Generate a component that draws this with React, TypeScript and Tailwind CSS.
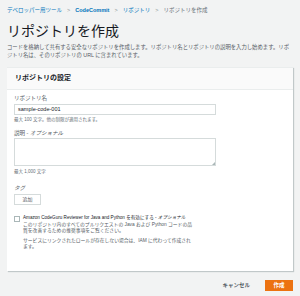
const Sep = () => <span className="mx-[5px] text-[#879596]">&gt;</span>;

export default function App() {
  return (
    <div
      className="w-[300px] h-[296px] overflow-hidden bg-[#f2f3f3] text-[#16191f]"
      style={{ fontFamily: '"Liberation Sans", "Noto Sans CJK JP", sans-serif' }}
    >
      <div className="px-[7px] pt-[6px]">
        <div className="flex items-center text-[5.5px] leading-[8px] h-[8px]">
          <span className="text-[#0073bb]">デベロッパー用ツール</span>
          <Sep />
          <span className="text-[#0073bb] font-bold">CodeCommit</span>
          <Sep />
          <span className="text-[#0073bb]">リポジトリ</span>
          <Sep />
          <span className="text-[#687078]">リポジトリを作成</span>
        </div>
        <h1 className="mt-[9px] text-[14px] leading-[16px] text-[#16191f]">リポジトリを作成</h1>
        <div className="mt-[4px] text-[5.35px] leading-[8px] text-[#545b64] whitespace-nowrap">
          <div>コードを格納して共有する安全なリポジトリを作成します。リポジトリ名とリポジトリの説明を入力し始めます。リポ</div>
          <div>ジトリ名は、そのリポジトリの URL に含まれています。</div>
        </div>

        <div className="mt-[8px] bg-white shadow-[1px_1px_1px_rgba(0,28,36,0.2)] border-t border-[#eaeded]">
          <div className="h-[22px] bg-[#fafafa] border-b border-[#eaeded] px-[8px] flex items-center">
            <span className="text-[7px] font-bold text-[#16191f]">リポジトリの設定</span>
          </div>
          <div className="px-[7px] pt-[5px] pb-[20px]">
            <div className="text-[5.5px] leading-[7px] text-[#545b64]">リポジトリ名</div>
            <div className="mt-[2px] w-[202px] h-[11px] border border-[#d5dbdb] flex items-center px-[3px] text-[5.5px] text-[#16191f]">
              sample-code-001
            </div>
            <div className="mt-[2px] text-[4.5px] leading-[6px] text-[#687078]">最大 100 文字。他の制限が適用されます。</div>

            <div className="mt-[7px] text-[5.5px] leading-[7px] text-[#545b64]">
              説明 - <i>オプショナル</i>
            </div>
            <div className="relative mt-[1px] w-[202px] h-[28px] border border-[#d5dbdb]">
              <div className="absolute right-0 bottom-0 w-0 h-0 border-l-[3px] border-l-transparent border-b-[3px] border-b-[#aab7b8]" />
            </div>
            <div className="mt-[3px] text-[4.5px] leading-[6px] text-[#687078]">最大 1,000 文字</div>

            <div className="mt-[10px] text-[5.5px] leading-[7px] text-[#545b64] italic">タグ</div>
            <div className="mt-[2px] w-[27px] h-[11px] border border-[#d5dbdb] flex items-center justify-center text-[5px] text-[#545b64]">
              追加
            </div>

            <div className="mt-[10px] flex items-start gap-[3px] whitespace-nowrap">
              <div className="mt-[1px] w-[6px] h-[6px] border border-[#aab7b8] shrink-0" />
              <div className="text-[4.8px] leading-[6.7px] text-[#545b64]">
                <div className="text-[#16191f] text-[4.6px]">
                  Amazon CodeGuru Reviewer for Java and Python を有効にする - <i>オプショナル</i>
                </div>
                <div>このリポジトリ内のすべてのプルリクエストの Java および Python コードの品</div>
                <div>質を改善するための推奨事項をご覧ください。</div>
                <div className="mt-[2.5px]">サービスにリンクされたロールが存在しない場合は、IAM に代わって作成され</div>
                <div>ます。</div>
              </div>
            </div>
          </div>
        </div>

        <div className="mt-[9px] flex items-center justify-end gap-[15px]">
          <span className="text-[5.5px] font-bold text-[#545b64]">キャンセル</span>
          <div className="w-[28px] h-[11px] bg-[#ec7211] flex items-center justify-center text-[5.5px] font-bold text-white">
            作成
          </div>
        </div>
      </div>
    </div>
  );
}
